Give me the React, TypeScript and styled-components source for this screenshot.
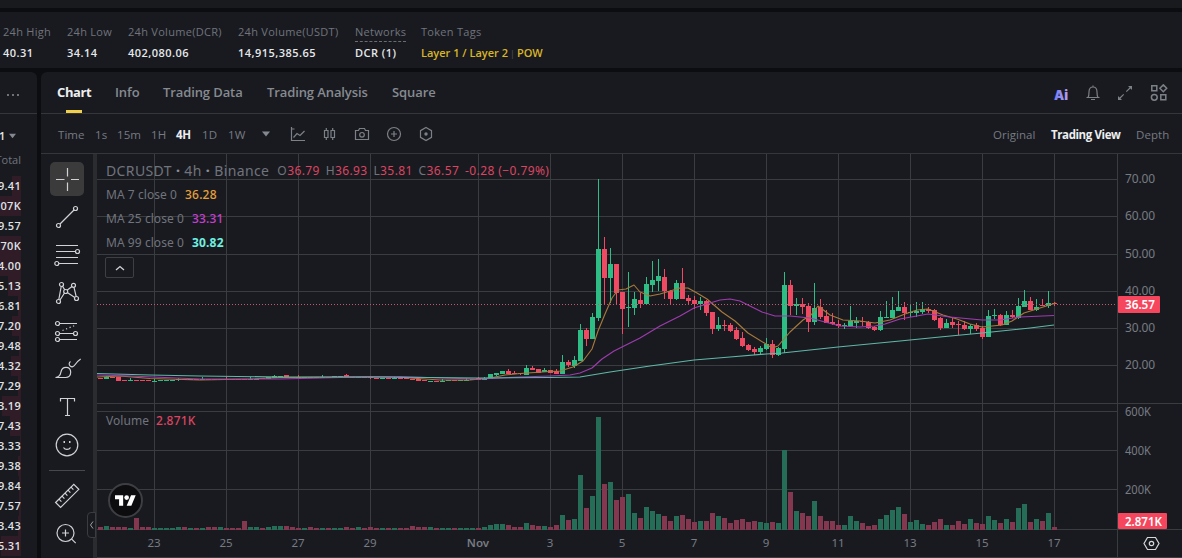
import { createGlobalStyle, styled } from "styled-components";

const GlobalStyle = createGlobalStyle`
  * { box-sizing: border-box; }
  body {
    margin: 0;
    background: #0b0d11;
    overflow: hidden;
    font-family: "Open Sans", "Noto Sans", sans-serif;
  }
`;
const Page = styled.div`
  display: flex;
  flex-direction: column;
  gap: 4px;
  width: 1182px;
  height: 558px;
`;
const TopBar = styled.div`
  height: 8px;
  background: #191a1e;
`;
const Ticker = styled.div`
  height: 56px;
  padding: 12px 0 0 3px;
  background: #191a20;
  display: grid;
  grid-template-columns: 64px 61px 110px 117px 66px 200px;
`;
const TickerItem = styled.div`
  display: flex;
  flex-direction: column;
  align-items: flex-start;
  white-space: nowrap;
`;
const TickerLabel = styled.span<{ $dashed?: boolean }>`
  font-size: 11px;
  line-height: 16px;
  height: 18px;
  color: #70747c;
  letter-spacing: 0.29px;
  border-bottom: 1px ${(p) => (p.$dashed ? "dashed #686c73" : "solid transparent")};
`;
const TickerValue = styled.span<{ $yellow?: boolean }>`
  font-size: 11px;
  line-height: 16px;
  margin-top: 3px;
  font-weight: 600;
  letter-spacing: ${(p) => (p.$yellow ? 0 : 0.48)}px;
  color: ${(p) => (p.$yellow ? "#d9b626" : "#e6e8ea")};
  i {
    font-style: normal;
    font-weight: 400;
    color: #50545b;
    padding: 0 2px;
    font-size: 9px;
  }
`;
const Body = styled.div`
  display: flex;
  gap: 4px;
  height: 486px;
`;
const OrderBook = styled.div`
  width: 37px;
  background: #191a20;
  border-top-right-radius: 6px;
  overflow: hidden;
`;
const BookHead = styled.div`
  height: 42px;
  border-bottom: 1px solid #34363b;
  display: flex;
  align-items: center;
  gap: 3px;
  padding: 4px 0 0 7px;
  span {
    width: 2px;
    height: 2px;
    border-radius: 1px;
    background: #8b8f96;
  }
`;
const BookStep = styled.div`
  height: 40px;
  margin-left: -1px;
  display: flex;
  align-items: center;
  gap: 4px;
  padding-top: 3px;
  color: #e6e8ea;
  font-size: 11px;
  font-weight: 600;
`;
const BookTotal = styled.div`
  width: 21px;
  height: 22px;
  line-height: 11px;
  display: flex;
  justify-content: flex-end;
  font-size: 11px;
  color: #70747c;
`;
const BookRow = styled.div`
  width: 21px;
  height: 20px;
  display: flex;
  justify-content: flex-end;
  line-height: 20px;
  font-size: 11px;
  font-weight: 600;
  letter-spacing: 0.3px;
  color: #dfe1e4;
`;
const Depth = styled.div<{ $w: number }>`
  width: 21px;
  display: flex;
  justify-content: flex-end;
  background: linear-gradient(#301c27, #301c27) no-repeat right / ${(p) => p.$w}px 100%;
`;
const Panel = styled.div`
  flex: 1;
  background: #191a20;
  border-top-left-radius: 6px;
  display: flex;
  flex-direction: column;
`;
const TabBar = styled.div`
  height: 42px;
  padding-left: 16px;
  border-bottom: 1px solid #34363b;
  display: flex;
  justify-content: space-between;
`;
const Tabs = styled.div`
  display: grid;
  grid-template-columns: 58px 48px 104px 125px 60px;
`;
const Tab = styled.div<{ $active?: boolean }>`
  display: flex;
  flex-direction: column;
  align-items: flex-start;
  justify-content: space-between;
  padding-top: 10px;
  font-size: 13px;
  line-height: 20px;
  font-weight: ${(p) => (p.$active ? 700 : 600)};
  letter-spacing: ${(p) => (p.$active ? -0.4 : -0.1)}px;
  white-space: nowrap;
  color: ${(p) => (p.$active ? "#eceef0" : "#868a91")};
  &::after {
    content: "";
    width: 16px;
    height: 3px;
    margin-left: 9px;
    background: ${(p) => (p.$active ? "#f0d04a" : "transparent")};
  }
`;
const HeadIcons = styled.div`
  display: flex;
  align-items: center;
  padding-right: 14px;
  gap: 14px;
  svg:last-child {
    margin-left: 2px;
  }
`;
const ToolBar = styled.div`
  height: 40px;
  padding: 2px 13px 0 17px;
  border-bottom: 1px solid #34363b;
  display: flex;
  align-items: center;
  justify-content: space-between;
`;
const Periods = styled.div`
  display: grid;
  align-items: center;
  grid-template-columns: 37px 22px 34px 25px 26px 26px 34px 26px 32px 32px 32px 32px 20px;
  svg {
    margin-top: -2px;
  }
`;
const Period = styled.span<{ $active?: boolean }>`
  font-size: 11.5px;
  white-space: nowrap;
  font-weight: ${(p) => (p.$active ? 700 : 400)};
  letter-spacing: ${(p) => (p.$active ? -0.4 : 0.05)}px;
  color: ${(p) => (p.$active ? "#eceef0" : "#777b82")};
`;
const Views = styled.div`
  display: grid;
  grid-template-columns: 58px 85px 33px;
`;
const Workspace = styled.div`
  flex: 1;
  display: flex;
`;
const ToolRail = styled.div`
  width: 52px;
  padding-top: 6px;
  display: flex;
  flex-direction: column;
  align-items: center;
`;
const Tool = styled.div<{ $active?: boolean }>`
  width: 34px;
  height: 34px;
  margin: 2px 0;
  border-radius: 5px;
  display: flex;
  align-items: center;
  justify-content: center;
  background: ${(p) => (p.$active ? "#3b3b3c" : "transparent")};
`;
const RailLine = styled.div`
  width: 36px;
  height: 1px;
  margin: 6px 0;
  background: #46484c;
`;
const Splitter = styled.div`
  position: relative;
  width: 4px;
  background: #2b2c30;
`;
const Handle = styled.div`
  position: absolute;
  left: -6px;
  top: 358px;
  width: 9px;
  height: 26px;
  border: 1px solid #3a3c41;
  border-radius: 4px 0 0 4px;
  background: #191a20;
  display: flex;
  align-items: center;
  justify-content: center;
`;
const ChartArea = styled.div`
  position: relative;
  width: 1085px;
  height: 404px;
  svg.plot {
    display: block;
    font-family: "Noto Sans", sans-serif;
    font-size: 12px;
  }
`;
const Legend = styled.div`
  position: absolute;
  left: 9px;
  top: 4px;
  font-family: "Noto Sans", sans-serif;
  color: #70747c;
  white-space: nowrap;
`;
const SymbolLine = styled.div`
  display: flex;
  align-items: center;
  height: 24px;
  font-size: 14px;
  letter-spacing: 0.38px;
`;
const SymbolName = styled.span`
  white-space: pre;
  i {
    font-style: normal;
    font-weight: 800;
    color: #8b8f96;
  }
`;
const Ohlc = styled.div`
  display: flex;
  margin-left: 8px;
  gap: 5.8px;
  font-size: 12px;
  letter-spacing: 0.4px;
  b {
    font-weight: 400;
    color: #dc4560;
  }
`;
const StudyLine = styled.div<{ $color: string; $bold?: boolean }>`
  display: flex;
  align-items: center;
  gap: 8px;
  height: 24px;
  font-size: 12px;
  letter-spacing: 0.06px;
  b {
    font-weight: ${(p) => (p.$bold ? 700 : 500)};
    letter-spacing: 0.2px;
    color: ${(p) => p.$color};
  }
`;
const Collapse = styled.div`
  width: 29px;
  height: 21px;
  margin: 3px 0 0 -1px;
  border: 1px solid #3d3f44;
  border-radius: 2px;
  display: flex;
  align-items: center;
  justify-content: center;
`;
const VolumeLegend = styled(StudyLine)`
  position: absolute;
  left: 9px;
  top: 254px;
  gap: 7px;
  font-family: "Noto Sans", sans-serif;
  color: #70747c;
`;
const Brand = styled.div`
  position: absolute;
  left: 11px;
  top: 329px;
  width: 35px;
  height: 35px;
  border-radius: 50%;
  border: 2px solid #3d3f43;
  background: #0d0d0f;
  display: flex;
  align-items: center;
  justify-content: center;
`;

const UP = "#2ebd85";
const DOWN = "#ef4a64";
const GRID = "#3a3d40";

const bookRows: [string, number][] = [
  ["9.41", 9], ["07K", 21], ["9.57", 0], ["70K", 21], ["4.00", 21], ["5.13", 13], ["6.81", 3],
  ["7.20", 9], ["9.48", 2], ["4.32", 10], ["7.29", 3], ["3.19", 19], ["7.43", 11], ["3.33", 1],
  ["9.38", 3], ["9.84", 2], ["7.57", 2], ["3.43", 3], ["5.31", 20],
];

// [direction, body top, body bottom, wick top, wick bottom, volume], in thirds of a pixel
type Candle = [1 | 0, number, number, number, number, number];
const candles: Candle[] = [
  [0, 625, 630, 620, 631, 4], [1, 625, 629, 622, 630, 8], [1, 613, 626, 612, 627, 14], [1, 609, 615, 608, 618, 17],
  [1, 603, 612, 602, 612, 17], [0, 602, 611, 597, 612, 14], [0, 609, 612, 604, 613, 8], [0, 610, 613, 608, 614, 8],
  [1, 594, 614, 585, 615, 20], [0, 594, 599, 588, 600, 14], [0, 597, 609, 597, 610, 11], [1, 600, 606, 594, 607, 11],
  [0, 600, 608, 599, 609, 8], [0, 604, 611, 597, 612, 14], [1, 576, 611, 554, 612, 44], [0, 576, 585, 570, 590, 29],
  [1, 570, 587, 558, 593, 32], [1, 480, 572, 462, 573, 164], [0, 480, 507, 474, 527, 65], [1, 441, 507, 430, 508, 101],
  [1, 237, 443, 27, 453, 338], [0, 237, 324, 200, 406, 137], [1, 282, 324, 234, 400, 143], [0, 282, 368, 282, 404, 89],
  [0, 366, 417, 366, 492, 98], [1, 411, 414, 306, 470, 107], [1, 387, 413, 366, 434, 50], [0, 390, 402, 370, 414, 35],
  [1, 342, 402, 322, 406, 68], [1, 330, 345, 273, 366, 56], [1, 318, 333, 267, 362, 47], [0, 321, 362, 297, 386, 41],
  [0, 362, 386, 360, 406, 26], [1, 339, 386, 331, 390, 41], [0, 339, 386, 294, 386, 44], [0, 384, 392, 374, 404, 32],
  [0, 390, 401, 378, 418, 23], [1, 393, 402, 381, 420, 26], [0, 393, 429, 390, 438, 26], [0, 426, 477, 426, 491, 50],
  [1, 465, 476, 440, 484, 41], [0, 465, 468, 450, 482, 35], [0, 465, 483, 459, 486, 20], [0, 480, 507, 471, 510, 29],
  [0, 504, 528, 486, 530, 32], [0, 525, 539, 522, 542, 23], [0, 537, 546, 531, 555, 26], [1, 534, 546, 528, 554, 23],
  [1, 522, 537, 504, 540, 20], [0, 522, 555, 510, 563, 23], [1, 534, 555, 530, 557, 20], [1, 345, 537, 306, 548, 239],
  [0, 345, 408, 330, 435, 113], [1, 402, 407, 384, 434, 56], [0, 402, 410, 384, 433, 50], [0, 408, 456, 399, 486, 41],
  [1, 414, 456, 338, 464, 86], [0, 411, 441, 387, 446, 41], [0, 438, 459, 420, 459, 26], [0, 456, 462, 430, 466, 26],
  [0, 462, 468, 450, 474, 14], [1, 465, 468, 459, 476, 14], [1, 453, 468, 408, 468, 41], [1, 453, 458, 441, 474, 26],
  [0, 453, 456, 441, 468, 20], [0, 456, 474, 453, 476, 11], [0, 470, 479, 468, 484, 14], [1, 441, 480, 422, 482, 32],
  [1, 441, 444, 393, 444, 44], [1, 420, 444, 381, 444, 59], [1, 411, 423, 363, 423, 68], [0, 411, 429, 396, 451, 47],
  [1, 426, 429, 405, 440, 23], [1, 423, 428, 396, 442, 29], [1, 417, 426, 396, 432, 17], [0, 417, 423, 410, 428, 14],
  [0, 420, 449, 417, 453, 23], [0, 444, 474, 441, 480, 32], [1, 459, 474, 447, 474, 14], [0, 456, 465, 444, 474, 14],
  [0, 462, 465, 453, 495, 26], [0, 465, 477, 453, 480, 17], [1, 468, 477, 462, 493, 32], [0, 465, 476, 459, 482, 20],
  [0, 474, 500, 468, 506, 17], [1, 438, 500, 420, 500, 41], [1, 435, 438, 418, 447, 29], [0, 435, 464, 433, 468, 20],
  [1, 435, 464, 423, 465, 32], [0, 436, 440, 420, 444, 23], [1, 408, 444, 384, 446, 65], [1, 393, 411, 360, 411, 77],
  [0, 393, 419, 381, 420, 23], [1, 411, 420, 387, 422, 32], [0, 405, 408, 388, 408, 26], [1, 399, 407, 363, 414, 50],
  [0, 400, 403, 395, 408, 8],
];

// quiet stretch before November: direction, middle of the body, body height, volume
const quiet: [1 | 0, number, number, number][] = [
  [0, 378, 1, 3], [1, 377.5, 2, 3.3], [0, 377, 1, 3], [0, 378.5, 4, 3], [0, 380, 1, 3], [1, 380, 1, 2], [0, 380, 1, 11.5],
  [0, 380, 1, 3], [0, 380, 1, 3], [1, 381, 1, 2], [1, 380.5, 1, 2], [1, 380, 1, 2], [1, 380, 1, 2], [1, 379.5, 1, 3],
  [0, 379.5, 1, 3], [1, 379, 1, 2], [0, 379, 1, 2], [1, 379, 1, 2], [0, 379, 1, 3], [0, 379, 1, 3], [1, 379.5, 1, 3],
  [0, 379, 1, 2], [0, 379, 1, 2], [0, 379, 1, 2], [0, 379, 1, 8.5], [1, 379, 1, 3], [1, 379, 1, 3], [0, 378.5, 1, 2],
  [1, 378, 1.5, 3], [1, 377, 2, 4], [1, 376.5, 1, 4], [0, 376, 2, 4], [0, 377, 1, 3], [0, 377, 1, 2], [1, 377, 1, 2],
  [0, 377, 1, 3], [0, 377, 1, 2], [1, 377, 1, 2], [0, 377, 1, 2], [1, 376.5, 1, 2], [1, 376, 1, 2], [0, 376, 1.5, 3],
  [0, 377, 1, 2], [1, 377, 1, 3], [0, 377, 1, 2], [0, 377.5, 1, 3], [0, 378, 1, 2], [1, 378, 1, 2], [0, 378, 1, 2],
  [1, 378, 1, 2], [0, 378, 1, 2], [0, 378.5, 1, 2], [0, 379.5, 1.5, 4], [0, 380, 1.5, 3], [0, 380.5, 1, 3], [1, 381, 1, 3],
  [0, 381, 1, 2], [1, 381, 1, 2], [1, 380.5, 1, 2], [0, 380, 1, 2], [1, 380, 1, 2], [1, 380, 1, 2], [1, 379.5, 1, 2],
];

const ma7 =
  "97,377 120,376 150,378.5 200,380 250,379 280,377.5 340,377 390,376.5 410,378 440,380 470,380 490,378 505,375 520,373.5 550,371.5 560,371 573,367 583,361 592,349 598,331 605,314 612,298 618,290 626,289 634,285 640,292 650,296 660,294 670,291 680,288 688,288 697,293 707,299 722,312 735,321 748,333 766,344 772,348 778,346 790,332 803,320 811,315 818,306 830,315 843,320 860,321 875,323 890,320 905,314 917,310 928,309 943,315 957,319 970,324 982,327 992,326 1002,325 1012,321 1024,313 1040,308 1056,303";
const ma25 =
  "97,375 130,376 200,379 280,379 340,377.5 400,376.5 440,378 480,379 520,377 550,376 570,375 580,373 592,368 602,359 614,351 640,338 660,326 680,316 694,308 710,303 720,300 730,299 740,301 750,306 762,312 775,316 790,316 810,318 825,322 840,326 860,327 875,326 885,324 900,319 928,314 950,317 982,320 1000,320 1020,317 1054,315.5";
const ma99 =
  "97,373.5 150,375 200,376 280,377 370,377 430,377.5 480,378 550,377.5 580,377 592,375 610,372 650,366 694,360 730,357 766,354 782,353 838,347 900,341 940,337 982,333 1030,328 1054,325";

const dates: [number, string][] = [
  [154, "23"], [226, "25"], [298, "27"], [370, "29"], [478, "Nov"], [550, "3"], [622, "5"],
  [694, "7"], [766, "9"], [838, "11"], [910, "13"], [982, "15"], [1054, "17"],
];
const prices: [number, string][] = [
  [179, "70.00"], [216, "60.00"], [254, "50.00"], [291, "40.00"], [328, "30.00"], [365, "20.00"],
];
const volumes: [number, string][] = [[411, "600K"], [450, "400K"], [489, "200K"]];

function Plot() {
  return (
    <svg className="plot" width="1085" height="404" viewBox="97 154 1085 404">
      <g stroke={GRID} shapeRendering="crispEdges">
        {dates.map(([x]) => (
          <path key={x} d={`M${x + 0.5} 154V529`} />
        ))}
        {[...prices, ...volumes].map(([y]) => (
          <path key={y} d={`M97 ${y + 0.5}H1117`} />
        ))}
        <path d="M97 403.5H1182M97 529.5H1182M1117.5 154V558M97 557.5H1182" />
      </g>
      <g shapeRendering="crispEdges">
        {quiet.map(([up, , , v], i) => (
          <rect key={i} x={98 + i * 6} y={529.5 - v} width="5" height={v} fill={up ? "#266d58" : "#833850"} />
        ))}
        {candles.map(([up, , , , , v], i) => (
          <rect key={i} x={476 + i * 6} y={529.6 - v / 3} width="5" height={v / 3} fill={up ? "#266d58" : "#833850"} />
        ))}
      </g>
      <g shapeRendering="crispEdges">
        {quiet.map(([up, y, h], i) => (
          <g key={i} fill={up ? UP : DOWN}>
            <rect x={98 + i * 6} y={y - h / 2} width="5" height={h} />
            {i % 4 === 1 && <rect x={100 + i * 6} y={y - 2} width="1" height="3" />}
          </g>
        ))}
        {candles.map(([up, top, bottom, high, low], i) => (
          <g key={i} fill={up ? UP : DOWN}>
            <rect x={476 + i * 6} y={170 + top / 3} width="5" height={(bottom - top) / 3} />
            <rect x={478 + i * 6} y={170 + high / 3} width="1" height={(low - high) / 3} />
          </g>
        ))}
      </g>
      <g fill="none" strokeWidth="1.1" strokeLinejoin="round">
        <polyline points={ma7} stroke="#a87a3c" />
        <polyline points={ma25} stroke="#a03bb0" />
        <polyline points={ma99} stroke="#5fb8a8" />
      </g>
      <path d="M97 304.5H1117" stroke="#c05a6c" strokeDasharray="1 2" shapeRendering="crispEdges" />
      <g fill="#777b82">
        {prices.map(([y, label]) => (
          <text key={label} x="1125" y={y + 4} textLength="30">{label}</text>
        ))}
        {volumes.map(([y, label]) => (
          <text key={label} x="1125" y={y + 5} textLength="26" lengthAdjust="spacingAndGlyphs">{label}</text>
        ))}
        {dates.map(([x, label]) => (
          <text key={x} x={x} y="547" fontSize="11.5" textAnchor="middle" fontWeight={label === "Nov" ? 600 : 400}>{label}</text>
        ))}
      </g>
      <rect x="1118" y="296" width="42" height="17" rx="1" fill="#f6465d" />
      <rect x="1118" y="513" width="49" height="16" rx="1" fill="#f6465d" />
      <g fill="#fff" fontWeight="600">
        <text x="1125" y="309" textLength="30" lengthAdjust="spacingAndGlyphs">36.57</text>
        <text x="1125" y="525.5" textLength="37" lengthAdjust="spacingAndGlyphs">2.871K</text>
      </g>
      <g fill="none" stroke="#d5d7da" strokeWidth="1.2">
        <path d="M1147.5 537.5h8l3.5 6-3.5 6h-8l-3.5-6z" />
        <circle cx="1151.5" cy="543.5" r="2.2" />
      </g>
    </svg>
  );
}

const toolShapes = [
  <path d="M3 14.5h8.5M18 14.5h8M14.5 3v8.5M14.5 17.5v8.5" />,
  <>
    <circle cx="5.5" cy="22.5" r="2" /><circle cx="22.5" cy="5.5" r="2" />
    <path d="M7 21L21 7" />
  </>,
  <>
    <path d="M3 4.5h22M3 10.5h19.5M3 16.5h22M6 22.5h19" />
    <circle cx="24.5" cy="10.5" r="2" /><circle cx="3.8" cy="22.5" r="2" />
  </>,
  <>
    <path d="M5.8 20.5L8.2 7.5M9.5 7.3l2.3 3.6M14 11.3l5-3.8M21 8.4l2.2 9.2M7 21l4.5-7M14.3 13.6l7.5 4.9" />
    <circle cx="5.5" cy="22.5" r="2" /><circle cx="8.5" cy="5.5" r="2" /><circle cx="12.7" cy="12.5" r="2" />
    <circle cx="20.5" cy="6.3" r="2" /><circle cx="23.5" cy="19.5" r="2" />
  </>,
  <>
    <path d="M6.5 6.5H24M6.5 16.5h14M6.5 22.5H24" />
    <path d="M9.5 13.5L23 8" strokeDasharray="1.2 2.6" />
    <circle cx="4.5" cy="6.5" r="2" /><circle cx="4.5" cy="16.5" r="2" /><circle cx="22.5" cy="16.5" r="2" /><circle cx="4.5" cy="22.5" r="2" />
  </>,
  <>
    <path d="M2.5 22.5h10.2c3 0 5-2.3 5-5.2 0-3-1.9-5-4.7-5-3 0-4.6 2-5.1 4.8-.5 3-2 5-5.4 5.4z" />
    <path d="M17.5 6.5c-1.7 1.3-1.7 3.2-.3 4.5 1.7 1.5 3.5.8 5-1.5 1.5-2.2 2.5-3.5 5.5-5.5" />
  </>,
  <path d="M7.5 8.5v-3h14v3M14.5 5.5v17M12 22.5h5" />,
  <>
    <circle cx="14" cy="14" r="10.8" />
    <path d="M10.5 16.5c1.5 2.6 5.5 2.6 7 0" />
    <path d="M10.5 11h1.5M16 11h1.5" strokeWidth="2" />
  </>,
  <>
    <path d="M2.6 20.5L20.8 2.3l5 5L7.6 25.5z" />
    <path d="M6 17.2l2.4 2.4M9 14.2l2.4 2.4M12 11.2l2.4 2.4M15 8.2l2.4 2.4M18 5.2l2.4 2.4" />
  </>,
  <>
    <circle cx="12.5" cy="13" r="8.5" />
    <path d="M18.7 19.2l4 4M12.5 9.5v7M9 13h7" />
  </>,
];

const ToolIcon = ({ index }: { index: number }) => (
  <svg width="28" height="28" viewBox="0 0 28 28" fill="none" stroke="#d0d2d5" strokeWidth="1.2">
    {toolShapes[index]}
  </svg>
);

const BarIcon = ({ children }: { children: React.ReactNode }) => (
  <svg width="18" height="18" viewBox="0 0 18 18" fill="none" stroke="#7c8087" strokeWidth="1.2">
    {children}
  </svg>
);

const Caret = ({ size = 8 }: { size?: number }) => (
  <svg width={size} height="6" viewBox="0 0 8 6">
    <path d="M0 .5h8L4 5.5z" fill="#85898f" />
  </svg>
);

function App() {
  return (
    <>
      <GlobalStyle />
      <Page>
        <TopBar />
        <Ticker>
          <TickerItem>
            <TickerLabel>24h High</TickerLabel>
            <TickerValue>40.31</TickerValue>
          </TickerItem>
          <TickerItem>
            <TickerLabel>24h Low</TickerLabel>
            <TickerValue>34.14</TickerValue>
          </TickerItem>
          <TickerItem>
            <TickerLabel>24h Volume(DCR)</TickerLabel>
            <TickerValue>402,080.06</TickerValue>
          </TickerItem>
          <TickerItem>
            <TickerLabel>24h Volume(USDT)</TickerLabel>
            <TickerValue>14,915,385.65</TickerValue>
          </TickerItem>
          <TickerItem>
            <TickerLabel $dashed>Networks</TickerLabel>
            <TickerValue>DCR (1)</TickerValue>
          </TickerItem>
          <TickerItem>
            <TickerLabel>Token Tags</TickerLabel>
            <TickerValue $yellow>Layer 1 / Layer 2<i>|</i>POW</TickerValue>
          </TickerItem>
        </Ticker>
        <Body>
          <OrderBook>
            <BookHead><span /><span /><span /></BookHead>
            <BookStep>1<Caret size={7} /></BookStep>
            <BookTotal>Total</BookTotal>
            {bookRows.map(([value, w], i) => (
              <BookRow key={i}><Depth $w={w}>{value}</Depth></BookRow>
            ))}
          </OrderBook>
          <Panel>
            <TabBar>
              <Tabs>
                <Tab $active>Chart</Tab>
                <Tab>Info</Tab>
                <Tab>Trading Data</Tab>
                <Tab>Trading Analysis</Tab>
                <Tab>Square</Tab>
              </Tabs>
              <HeadIcons>
                <svg width="18" height="20" viewBox="0 0 18 20">
                  <defs>
                    <linearGradient id="ai" x1="0" x2="1">
                      <stop offset="0" stopColor="#6f7df5" />
                      <stop offset="1" stopColor="#b9a0f0" />
                    </linearGradient>
                  </defs>
                  <text x="2" y="17" fontFamily="Inter, sans-serif" fontSize="13" fontWeight="900" textLength="14" lengthAdjust="spacingAndGlyphs" fill="url(#ai)">Ai</text>
                </svg>
                <BarIcon>
                  <path d="M2.5 13.5h13M4 13.5c1-1.5 1-3 1-5.5 0-3 1.5-5 4-5s4 2 4 5c0 2.5 0 4 1 5.5M9 3V1.500M7 15.500h4" />
                </BarIcon>
                <BarIcon>
                  <path d="M3.500 14.500L7.700 10.300M10.300 7.700l4.200-4.200" />
                  <path d="M2 12v4h4zM12 2h4v4z" fill="#7c8087" stroke="none" />
                </BarIcon>
                <BarIcon>
                  <g strokeWidth="1.5">
                    <path d="M1.800 1.800h5v5h-5zM10.800 10.800h5v5h-5zM13.300.9l3.400 3.400-3.400 3.400-3.400-3.400z" />
                    <circle cx="4.3" cy="13.3" r="2.9" />
                  </g>
                </BarIcon>
              </HeadIcons>
            </TabBar>
            <ToolBar>
              <Periods>
                <Period>Time</Period>
                <Period>1s</Period>
                <Period>15m</Period>
                <Period>1H</Period>
                <Period $active>4H</Period>
                <Period>1D</Period>
                <Period>1W</Period>
                <Caret />
                <BarIcon><path d="M3.500 2v13.500H17M5.500 12.500l3.500-4 3 2 4.500-4.500M3.500 4h3" /></BarIcon>
                <BarIcon><path d="M4.500 5.500H8v7H4.500zM11 5.500h3.500v7H11zM6.300 3v2.500M6.300 12.500V15M12.700 3v2.500M12.700 12.500V15" /></BarIcon>
                <BarIcon>
                  <path d="M3.500 5.500h3l1-2h5l1 2h3v9h-13z" />
                  <circle cx="10" cy="9.8" r="2.3" />
                </BarIcon>
                <BarIcon>
                  <circle cx="10" cy="9" r="6.5" />
                  <path d="M10 6v6M7 9h6" />
                </BarIcon>
                <BarIcon>
                  <path d="M10 2.500l5.500 3.200v6.600L10 15.500l-5.500-3.200V5.700z" />
                  <circle cx="10" cy="9" r="1.7" fill="#7c8087" stroke="none" />
                </BarIcon>
              </Periods>
              <Views>
                <Period>Original</Period>
                <Period $active>Trading View</Period>
                <Period>Depth</Period>
              </Views>
            </ToolBar>
            <Workspace>
              <ToolRail>
                {[0, 1, 2, 3, 4, 5, 6, 7].map((i) => (
                  <Tool key={i} $active={i === 0}><ToolIcon index={i} /></Tool>
                ))}
                <RailLine />
                <Tool><ToolIcon index={8} /></Tool>
                <Tool><ToolIcon index={9} /></Tool>
              </ToolRail>
              <Splitter>
                <Handle>
                  <svg width="5" height="8" viewBox="0 0 5 8"><path d="M4 .5L1.500 4 4 7.500" fill="none" stroke="#9a9ea5" /></svg>
                </Handle>
              </Splitter>
              <ChartArea>
                <Plot />
                <Legend>
                  <SymbolLine>
                    <SymbolName>DCRUSDT <i>·</i> 4h <i>·</i> Binance</SymbolName>
                    <Ohlc>
                      <span>O<b>36.79</b></span>
                      <span>H<b>36.93</b></span>
                      <span>L<b>35.81</b></span>
                      <span>C<b>36.57</b></span>
                      <b>-0.28 (−0.79%)</b>
                    </Ohlc>
                  </SymbolLine>
                  <StudyLine $color="#e8a03a">MA 7 close 0 <b>36.28</b></StudyLine>
                  <StudyLine $color="#c43fd0">MA 25 close 0 <b>33.31</b></StudyLine>
                  <StudyLine $color="#6ff0e0" $bold>MA 99 close 0 <b>30.82</b></StudyLine>
                  <Collapse>
                    <svg width="10" height="6" viewBox="0 0 10 6"><path d="M1 5l4-3.500L9 5" fill="none" stroke="#d0d2d5" strokeWidth="1.3" /></svg>
                  </Collapse>
                </Legend>
                <VolumeLegend $color="#dc4560">Volume <b>2.871K</b></VolumeLegend>
                <Brand>
                  <svg width="21" height="11" viewBox="0 4 36 18" fill="#fff">
                    <path d="M14 22H7V11H0V4h14zM28 22h-8l7.500-18h8z" />
                    <circle cx="20" cy="8" r="4" />
                  </svg>
                </Brand>
              </ChartArea>
            </Workspace>
          </Panel>
        </Body>
      </Page>
    </>
  );
}
export default App;
